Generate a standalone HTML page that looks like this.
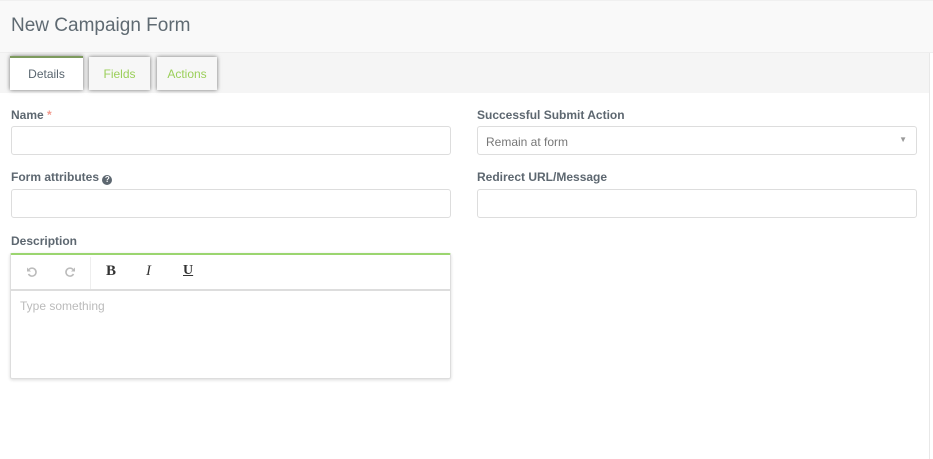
<!DOCTYPE html>
<html><head><style>
*{box-sizing:border-box;margin:0;padding:0}
body{width:933px;height:459px;background:#fff;font-family:"Liberation Sans",sans-serif;position:relative;overflow:hidden;color:#555}
.hdr{position:absolute;left:0;top:0;width:933px;height:53px;background:#f9f9f9;border-bottom:1px solid #eee;border-top:1px solid #f0f0f0}
.hdr h1{position:absolute;left:11px;top:14px;font-weight:normal;font-size:19px;color:#5f6a72}
.tabbar{position:absolute;left:0;top:53px;width:930px;height:40px;background:#f5f5f5}
.rline{position:absolute;left:929px;top:53px;width:1px;height:406px;background:#e8e8e8}
.tab{position:absolute;top:4px;height:33px;background:#f7f7f7;box-shadow:0 0 4px rgba(0,0,0,.55);font-size:12px;color:#9bcf5a;text-align:center;line-height:35px}
.tab.act{background:#fff;color:#5a6670;border-top:2px solid #7d9a5e;top:3px;height:34px;line-height:33px}
.lbl{position:absolute;font-size:12px;font-weight:bold;color:#5d6770}
.inp{position:absolute;height:29px;border:1px solid #ddd;border-radius:3px;background:#fff}
.ed{position:absolute;left:10px;top:253px;width:441px;height:126px;border:1px solid #ddd;border-top:2px solid #9bd56f;box-shadow:0 1px 3px rgba(0,0,0,.15);border-radius:2px}
.tb{height:36px;border-bottom:2px solid #ddd;position:relative}
.tb span{position:absolute;top:8px;font-family:"Liberation Serif",serif;font-size:15px;color:#333}
</style></head><body>
<div class="hdr"><h1>New Campaign Form</h1></div>
<div class="tabbar">
<div class="tab act" style="left:10px;width:73px">Details</div>
<div class="tab" style="left:89px;width:61px">Fields</div>
<div class="tab" style="left:157px;width:60px">Actions</div>
</div>
<div class="rline"></div>
<div class="lbl" style="left:11px;top:108px">Name <span style="color:#f29a8e">*</span></div>
<div class="inp" style="left:11px;top:126px;width:440px"></div>
<div class="lbl" style="left:11px;top:170px">Form attributes <span style="display:inline-block;width:10px;height:10px;border-radius:50%;background:#5d6770;color:#fff;font-size:8px;text-align:center;line-height:10px;vertical-align:-1px">?</span></div>
<div class="inp" style="left:11px;top:189px;width:440px"></div>
<div class="lbl" style="left:11px;top:234px">Description</div>
<div class="ed">
<div class="tb">
<svg style="position:absolute;left:15px;top:11px" width="12" height="12" viewBox="0 0 12 12"><path d="M3 3.5A4 4 0 1 1 2.5 8" fill="none" stroke="#bbb" stroke-width="1.6"/><path d="M1 1.5v4h4z" fill="#bbb"/></svg>
<svg style="position:absolute;left:53px;top:11px" width="12" height="12" viewBox="0 0 12 12"><path d="M9 3.5A4 4 0 1 0 9.5 8" fill="none" stroke="#bbb" stroke-width="1.6"/><path d="M11 1.5v4H7z" fill="#bbb"/></svg>
<div style="position:absolute;left:79px;top:2px;width:1px;height:32px;background:#eee"></div>
<span style="left:95px;font-weight:bold">B</span>
<span style="left:135px;font-style:italic">I</span>
<span style="left:172px;text-decoration:underline;font-weight:bold;font-size:14px">U</span>
</div>
<div style="padding:8px 9px;font-size:12px;color:#bbb">Type something</div>
</div>
<div class="lbl" style="left:477px;top:108px">Successful Submit Action</div>
<div class="inp" style="left:477px;top:126px;width:440px;font-size:12px;color:#777;padding:8px 8px">Remain at form<span style="position:absolute;right:9px;top:8px;font-size:8px;color:#999">▼</span></div>
<div class="lbl" style="left:477px;top:170px">Redirect URL/Message</div>
<div class="inp" style="left:477px;top:189px;width:440px"></div>
</body></html>
